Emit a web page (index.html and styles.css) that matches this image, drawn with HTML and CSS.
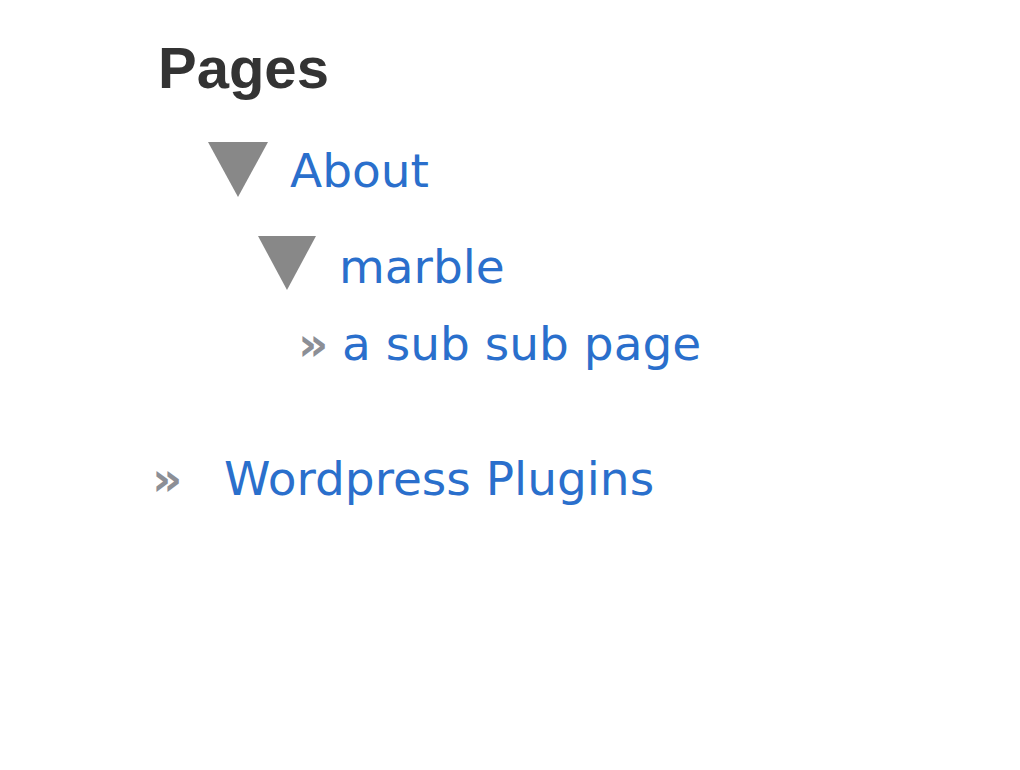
FILE: index.html
```html
<!DOCTYPE html>
<html>
<head>
<meta charset="utf-8">
<link rel="stylesheet" href="styles.css">
</head>
<body>
<div class="widget">
  <h2 class="title">Pages</h2>
  <ul class="tree">
    <li class="node top">
      <div class="row row-about">
        <svg class="toggle t1" viewBox="0 0 60 55" width="60" height="55"><polygon points="0,0 60,0 30,55" fill="#888888"/></svg>
        <a class="link" href="#">About</a>
      </div>
      <ul class="tree sub">
        <li class="node">
          <div class="row row-marble">
            <svg class="toggle t2" viewBox="0 0 58 54" width="58" height="54"><polygon points="0,0 58,0 29,54" fill="#888888"/></svg>
            <a class="link" href="#">marble</a>
          </div>
          <ul class="tree leaf">
            <li class="row row-subsub"><span class="raquo sm">»</span><a class="link" href="#">a sub sub page</a></li>
          </ul>
        </li>
      </ul>
    </li>
    <li class="row row-wp"><span class="raquo lg">»</span><a class="link" href="#">Wordpress Plugins</a></li>
  </ul>
</div>
</body>
</html>
```
FILE: styles.css
```css
html, body {
  margin: 0;
  padding: 0;
  background: #ffffff;
}
.widget {
  padding: 39px 0 0 152px;
  font-family: "DejaVu Sans", "Liberation Sans", sans-serif;
}
.title {
  margin: 0 0 46px 6px;
  font-family: "Liberation Sans", Arial, sans-serif;
  font-weight: bold;
  font-size: 58px;
  line-height: 58px;
  color: #333333;
}
.tree {
  list-style: none;
  margin: 0;
  padding: 0;
}
.top {
  padding-left: 56px;
}
.sub {
  padding-left: 50px;
  margin-top: 40px;
}
.leaf {
  padding-left: 40px;
  margin-top: 21px;
}
.row {
  display: flex;
  align-items: flex-start;
  font-size: 47px;
  line-height: 56px;
}
.toggle {
  flex: none;
  display: block;
}
.t1 {
  margin-top: -1px;
  margin-right: 22px;
}
.t2 {
  margin-top: -3px;
  margin-right: 23px;
}
.link {
  color: #2a6fcc;
  text-decoration: none;
}
.raquo {
  flex: none;
  color: #8c8f96;
  font-weight: bold;
}
.raquo.sm {
  width: 44px;
}
.raquo.lg {
  width: 72px;
}
.row-wp {
  margin-top: 79px;
}
```
